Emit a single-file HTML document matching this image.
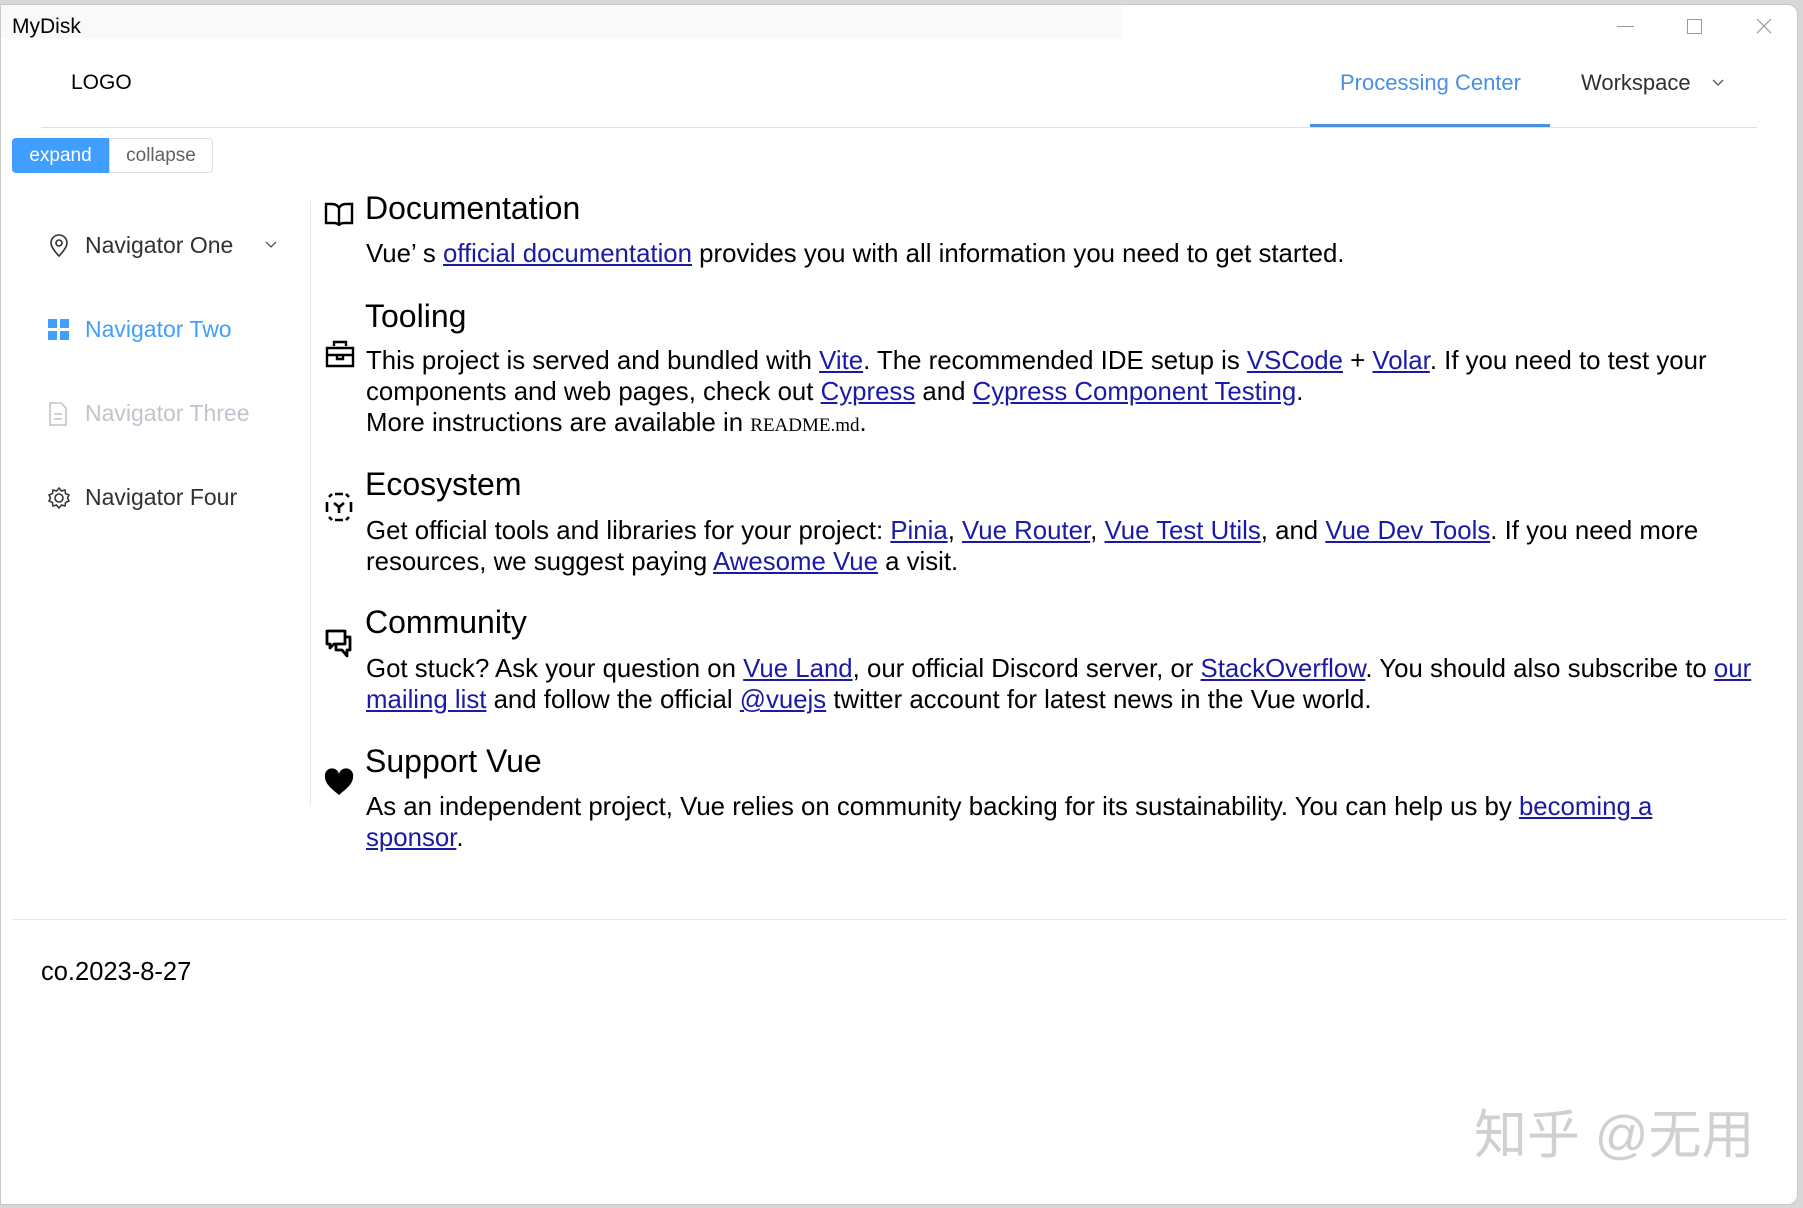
<!DOCTYPE html>
<html><head><meta charset="utf-8"><style>
body{margin:0;width:1803px;height:1208px;background:#d8d8d8;overflow:hidden;font-family:"Liberation Sans","Noto Sans CJK SC",sans-serif;position:relative}
.win{position:absolute;left:0;top:4px;width:1796px;height:1199px;background:#fff;border-radius:0 10px 10px 0;border:1px solid #c8c8c8}
.a{position:absolute;white-space:nowrap}
.t{font-size:25.8px;color:#000}
.h{font-size:32px;color:#000}
a{color:#1a1aa6;text-decoration:underline}
.nav{font-size:23px;color:#303133}
.ic{position:absolute}
</style></head><body>
<div class="win"></div>
<div class="a" style="left:1px;top:5px;width:1120px;height:33px;background:#f9f9f9"></div>
<div class="a" style="left:12px;top:15px;font-size:21px;color:#000">MyDisk</div>
<div class="a" style="left:1617px;top:26px;width:17px;height:1px;background:#999"></div>
<div class="a" style="left:1687px;top:19px;width:13px;height:13px;border:1px solid #999"></div>
<svg class="ic" style="left:1756px;top:18px" width="16" height="16"><path d="M1 1L15 15M15 1L1 15" stroke="#999" stroke-width="1.2"/></svg>
<div class="a" style="left:71px;top:71px;font-size:21px;color:#000">LOGO</div>
<div class="a" style="left:41px;top:127px;width:1716px;height:1px;background:#dcdfe6"></div>
<div class="a" style="left:1340px;top:70px;font-size:22px;color:#4a90e2">Processing Center</div>
<div class="a" style="left:1310px;top:124px;width:240px;height:3px;background:#4a90e2"></div>
<div class="a" style="left:1581px;top:70px;font-size:22px;color:#303133">Workspace</div>
<svg class="ic" style="left:1711px;top:78px" width="14" height="10"><path d="M2 2L7 7L12 2" stroke="#555" fill="none" stroke-width="1.3"/></svg>
<div class="a" style="left:12px;top:138px;width:97px;height:35px;background:#409eff;border-radius:4px 0 0 4px;color:#fff;font-size:19px;line-height:35px;text-align:center">expand</div>
<div class="a" style="left:109px;top:138px;width:102px;height:33px;border:1px solid #dcdfe6;border-radius:0 4px 4px 0;color:#606266;font-size:19px;line-height:33px;text-align:center">collapse</div>
<div class="a" style="left:310px;top:201px;width:1px;height:604px;background:#e4e7ed"></div>
<svg class="ic" style="left:48px;top:234px" width="22" height="24"><path d="M11 22C11 22 3 14 3 9a8 8 0 0 1 16 0c0 5-8 13-8 13z" fill="none" stroke="#303133" stroke-width="1.6"/><circle cx="11" cy="9" r="3" fill="none" stroke="#303133" stroke-width="1.6"/></svg>
<div class="a nav" style="left:85px;top:232px">Navigator One</div>
<svg class="ic" style="left:264px;top:240px" width="14" height="10"><path d="M2 2L7 7L12 2" stroke="#555" fill="none" stroke-width="1.3"/></svg>
<svg class="ic" style="left:48px;top:319px" width="22" height="22"><rect x="0" y="0" width="9" height="9" fill="#409eff"/><rect x="12" y="0" width="9" height="9" fill="#409eff"/><rect x="0" y="12" width="9" height="9" fill="#409eff"/><rect x="12" y="12" width="9" height="9" fill="#409eff"/></svg>
<div class="a nav" style="left:85px;top:316px;color:#409eff">Navigator Two</div>
<svg class="ic" style="left:48px;top:402px" width="20" height="24"><path d="M2 1h11l5 5v17H2z" fill="none" stroke="#c0c4cc" stroke-width="1.6"/><path d="M6 12h8M6 17h8" stroke="#c0c4cc" stroke-width="1.6"/></svg>
<div class="a nav" style="left:85px;top:400px;color:#c0c4cc">Navigator Three</div>
<svg class="ic" style="left:47px;top:486px" width="24" height="24"><circle cx="12" cy="12" r="4" fill="none" stroke="#303133" stroke-width="1.6"/><path d="M12 2l2.5 3 3.5-1 .5 3.5 3.5 1.5-1.5 3 1.5 3-3.5 1.5-.5 3.5-3.5-1L12 22l-2.5-3-3.5 1-.5-3.5L2 15l1.5-3L2 9l3.5-1.5L6 4l3.5 1z" fill="none" stroke="#303133" stroke-width="1.5"/></svg>
<div class="a nav" style="left:85px;top:484px">Navigator Four</div>

<svg class="ic" style="left:324px;top:200px" width="30" height="26"><path d="M2 4h6c4 0 6 2 7 4 1-2 3-4 7-4h6v19h-8c-3 0-4 1-5 2-1-1-2-2-5-2H2z M15 8v17" fill="none" stroke="#000" stroke-width="2.4"/></svg>
<div class="a h" style="left:365px;top:190px">Documentation</div>
<div class="a t" style="left:366px;top:240px">Vue’ s <a>official documentation</a> provides you with all information you need to get started.</div>

<svg class="ic" style="left:325px;top:340px" width="30" height="28"><path d="M9 6V2h12v4 M2 8h26v18H2z M2 15h26 M12 15v4h6v-4" fill="none" stroke="#000" stroke-width="2.4"/></svg>
<div class="a h" style="left:365px;top:298px">Tooling</div>
<div class="a t" style="left:366px;top:347px">This project is served and bundled with <a>Vite</a>. The recommended IDE setup is <a>VSCode</a> + <a>Volar</a>. If you need to test your</div>
<div class="a t" style="left:366px;top:378px">components and web pages, check out <a>Cypress</a> and <a>Cypress Component Testing</a>.</div>
<div class="a t" style="left:366px;top:409px">More instructions are available in <span style="font-family:'Liberation Serif',serif;font-size:19px">README.md</span>.</div>

<svg class="ic" style="left:324px;top:491px" width="30" height="32"><path d="M11 3h8M3 11v10M27 11v10M11 29h8M5 6l3-3M25 6l-3-3M5 26l3 3M25 26l-3 3M10 12l5 4 5-4M15 16v6" fill="none" stroke="#000" stroke-width="2.6"/></svg>
<div class="a h" style="left:365px;top:466px">Ecosystem</div>
<div class="a t" style="left:366px;top:517px">Get official tools and libraries for your project: <a>Pinia</a>, <a>Vue Router</a>, <a>Vue Test Utils</a>, and <a>Vue Dev Tools</a>. If you need more</div>
<div class="a t" style="left:366px;top:548px">resources, we suggest paying <a>Awesome Vue</a> a visit.</div>

<svg class="ic" style="left:324px;top:628px" width="30" height="32"><path d="M3 3h18v13H10l-4 4v-4H3z M21 9h5v13h-3v6l-5-6h-6v-6" fill="none" stroke="#000" stroke-width="2.8" stroke-linejoin="round"/></svg>
<div class="a h" style="left:365px;top:604px">Community</div>
<div class="a t" style="left:366px;top:655px">Got stuck? Ask your question on <a>Vue Land</a>, our official Discord server, or <a>StackOverflow</a>. You should also subscribe to <a>our</a></div>
<div class="a t" style="left:366px;top:686px"><a>mailing list</a> and follow the official <a>@vuejs</a> twitter account for latest news in the Vue world.</div>

<svg class="ic" style="left:324px;top:768px" width="30" height="28"><path d="M15 27C8 21 1 16 1 9a7 7 0 0 1 14-3 7 7 0 0 1 14 3c0 7-7 12-14 18z" fill="#000"/></svg>
<div class="a h" style="left:365px;top:743px">Support Vue</div>
<div class="a t" style="left:366px;top:793px">As an independent project, Vue relies on community backing for its sustainability. You can help us by <a>becoming a</a></div>
<div class="a t" style="left:366px;top:824px"><a>sponsor</a>.</div>

<div class="a" style="left:12px;top:919px;width:1774px;height:1px;background:#e4e7ed"></div>
<div class="a" style="left:41px;top:958px;font-size:25.5px;color:#000">co.2023-8-27</div>
<div class="a" style="left:1474px;top:1093px;font-size:53px;color:#d0d0d0;font-family:'Liberation Sans','Noto Sans CJK SC',sans-serif">知乎 @无用</div>
</body></html>
